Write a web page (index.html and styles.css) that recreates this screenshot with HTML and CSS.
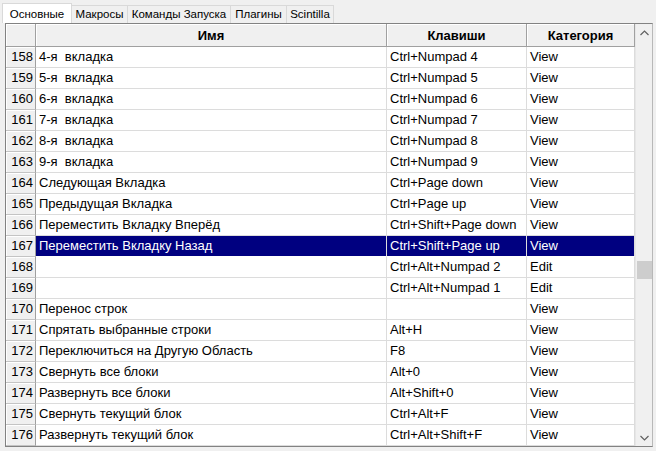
FILE: index.html
```
<!DOCTYPE html>
<html lang="ru">
<head>
    <meta charset="UTF-8">
    <title>Shortcut Mapper</title>
    <link rel="stylesheet" href="styles.css">
</head>
<body>
    <div class="tabs">
        <div class="tab active tab-main">Основные</div>
        <div class="tab tab-macro">Макросы</div>
        <div class="tab tab-run">Команды Запуска</div>
        <div class="tab tab-plugins">Плагины</div>
        <div class="tab tab-scintilla">Scintilla</div>
    </div>

    <div class="panel">
        <table class="grid">
            <colgroup>
                <col class="col-num">
                <col class="col-name">
                <col class="col-keys">
                <col class="col-cat">
            </colgroup>
            <thead>
                <tr>
                    <th></th>
                    <th>Имя</th>
                    <th>Клавиши</th>
                    <th>Категория</th>
                </tr>
            </thead>
            <tbody>
                <tr><td class="num">158</td><td>4-я  вкладка</td><td>Ctrl+Numpad 4</td><td>View</td></tr>
                <tr><td class="num">159</td><td>5-я  вкладка</td><td>Ctrl+Numpad 5</td><td>View</td></tr>
                <tr><td class="num">160</td><td>6-я  вкладка</td><td>Ctrl+Numpad 6</td><td>View</td></tr>
                <tr><td class="num">161</td><td>7-я  вкладка</td><td>Ctrl+Numpad 7</td><td>View</td></tr>
                <tr><td class="num">162</td><td>8-я  вкладка</td><td>Ctrl+Numpad 8</td><td>View</td></tr>
                <tr><td class="num">163</td><td>9-я  вкладка</td><td>Ctrl+Numpad 9</td><td>View</td></tr>
                <tr><td class="num">164</td><td>Следующая Вкладка</td><td>Ctrl+Page down</td><td>View</td></tr>
                <tr><td class="num">165</td><td>Предыдущая Вкладка</td><td>Ctrl+Page up</td><td>View</td></tr>
                <tr><td class="num">166</td><td>Переместить Вкладку Вперёд</td><td>Ctrl+Shift+Page down</td><td>View</td></tr>
                <tr class="selected"><td class="num">167</td><td>Переместить Вкладку Назад</td><td>Ctrl+Shift+Page up</td><td>View</td></tr>
                <tr><td class="num">168</td><td></td><td>Ctrl+Alt+Numpad 2</td><td>Edit</td></tr>
                <tr><td class="num">169</td><td></td><td>Ctrl+Alt+Numpad 1</td><td>Edit</td></tr>
                <tr><td class="num">170</td><td>Перенос строк</td><td></td><td>View</td></tr>
                <tr><td class="num">171</td><td>Спрятать выбранные строки</td><td>Alt+H</td><td>View</td></tr>
                <tr><td class="num">172</td><td>Переключиться на Другую Область</td><td>F8</td><td>View</td></tr>
                <tr><td class="num">173</td><td>Свернуть все блоки</td><td>Alt+0</td><td>View</td></tr>
                <tr><td class="num">174</td><td>Развернуть все блоки</td><td>Alt+Shift+0</td><td>View</td></tr>
                <tr><td class="num">175</td><td>Свернуть текущий блок</td><td>Ctrl+Alt+F</td><td>View</td></tr>
                <tr><td class="num">176</td><td>Развернуть текущий блок</td><td>Ctrl+Alt+Shift+F</td><td>View</td></tr>
            </tbody>
        </table>

        <div class="scrollbar">
            <div class="arrow">
                <svg width="9" height="6" viewBox="0 0 9 6"><path d="M0.5 5 L4.5 1 L8.5 5" fill="none" stroke="#606060" stroke-width="1.2"/></svg>
            </div>
            <div class="track">
                <div class="thumb"></div>
            </div>
            <div class="arrow">
                <svg width="9" height="6" viewBox="0 0 9 6"><path d="M0.5 1 L4.5 5 L8.5 1" fill="none" stroke="#606060" stroke-width="1.2"/></svg>
            </div>
        </div>
    </div>
</body>
</html>
```

FILE: styles.css
```
body {
    margin: 0;
    background-color: #f0f0f0;
    font-family: 'Liberation Sans', Arial, sans-serif;
    color: #000;
    width: 656px;
    height: 451px;
    overflow: hidden;
}
.tabs {
    display: flex;
    align-items: flex-end;
    height: 23px;
    padding-left: 2px;
}
.tab {
    height: 17px;
    line-height: 17px;
    font-size: 11.5px;
    text-align: center;
    background-color: #f0f0f0;
    border: 1px solid #d9d9d9;
    border-bottom: none;
    box-sizing: content-box;
    margin-left: -1px;
}
.tab.active {
    height: 19px;
    line-height: 20px;
    background-color: #ffffff;
    position: relative;
    z-index: 1;
    margin-left: 0;
}
.tab-main { width: 68px; }
.tab-macro { width: 55px; }
.tab-run { width: 102px; }
.tab-plugins { width: 55px; }
.tab-scintilla { width: 46px; }

.panel {
    display: flex;
    margin-left: 5px;
    width: 646px;
    border: 1px solid #828282;
    border-right-color: #b8b8b8;
    background-color: #fff;
}
.grid {
    table-layout: fixed;
    border-collapse: separate;
    border-spacing: 0;
    width: 629px;
    font-size: 13px;
}
.col-num { width: 30px; }
.col-name { width: 351px; }
.col-keys { width: 140px; }
.col-cat { width: 108px; }

.grid th {
    height: 21px;
    padding: 1px 0 0 0;
    font-weight: bold;
    text-align: center;
    background-color: #f0f0f0;
    border-right: 1px solid #a0a0a0;
    border-bottom: 1px solid #a0a0a0;
    box-shadow: inset 1px 1px #ffffff;
}
.grid td {
    padding: 0 0 0 3px;
    line-height: 20px;
    white-space: pre;
    overflow: hidden;
    border-right: 1px solid #dcdcdc;
    border-bottom: 1px solid #dcdcdc;
}
.grid td.num {
    padding: 0 2px 0 0;
    text-align: right;
    background-color: #f0f0f0;
    border-right: 1px solid #a0a0a0;
    border-bottom: 1px solid #c4c4c4;
    box-shadow: inset 1px 1px #ffffff;
}
.grid tr.selected td:not(.num) {
    background-color: #000080;
    color: #ffffff;
    border-bottom-color: #ffffff;
}

.scrollbar {
    display: flex;
    flex-direction: column;
    width: 17px;
    background-color: #f0f0f0;
    border-left: 1px solid #e6e6e6;
}
.arrow {
    height: 17px;
    display: flex;
    align-items: center;
    justify-content: center;
}
.track {
    flex: 1;
}
.thumb {
    margin: 220px 0 0 1px;
    width: 15px;
    height: 18px;
    background-color: #cdcdcd;
}
```
